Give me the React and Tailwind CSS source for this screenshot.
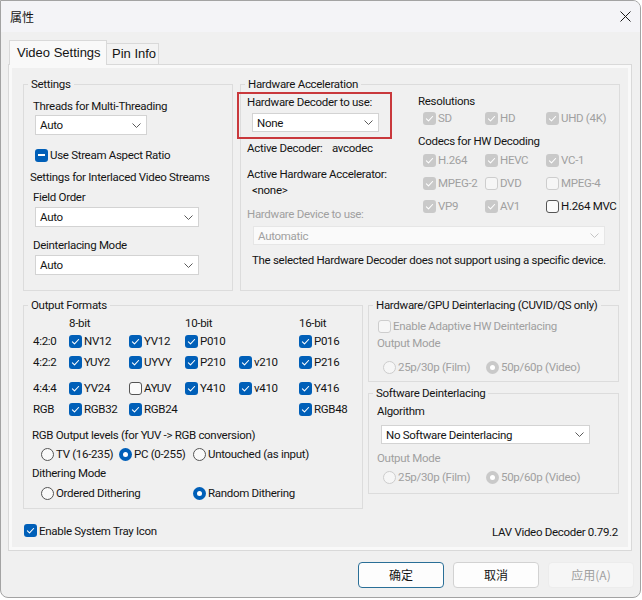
import React from 'react';

const GREY = 'text-[#a0a0a0]';

function CheckMark() {
  return (
    <svg width="13" height="13" viewBox="0 0 13 13" className="block">
      <path d="M3.4 6.9 L5.5 8.9 L9.6 4.5" fill="none" stroke="#ffffff" strokeWidth="1.1" strokeLinecap="round" strokeLinejoin="round" />
    </svg>
  );
}

function Box({ checked, disabled, mixed }) {
  if (mixed) {
    return (
      <span className="flex h-[13px] w-[13px] shrink-0 items-center justify-center rounded-[3px] bg-[#005fb8]">
        <span className="h-[1.5px] w-[7px] bg-white" />
      </span>
    );
  }
  if (checked) {
    return (
      <span className={`h-[13px] w-[13px] shrink-0 rounded-[3px] ${disabled ? 'bg-[#c9c9c9]' : 'bg-[#005fb8]'}`}>
        <CheckMark />
      </span>
    );
  }
  return (
    <span className={`h-[13px] w-[13px] shrink-0 rounded-[3px] border ${disabled ? 'border-[#cdcdcd] bg-[#f6f6f6]' : 'border-[#555555] bg-[#fbfbfb]'}`} />
  );
}

function Check({ label, checked, disabled, mixed, className = '' }) {
  return (
    <div className={`flex h-[16px] items-center gap-[2px] whitespace-nowrap ${className}`}>
      <Box checked={checked} disabled={disabled} mixed={mixed} />
      <span className={disabled ? GREY : ''}>{label}</span>
    </div>
  );
}

function Radio({ label, checked, disabled, className = '' }) {
  let dot;
  if (checked) {
    dot = (
      <span className={`flex h-[13px] w-[13px] shrink-0 items-center justify-center rounded-full ${disabled ? 'bg-[#c9c9c9]' : 'bg-[#005fb8]'}`}>
        <span className="h-[5px] w-[5px] rounded-full bg-white" />
      </span>
    );
  } else {
    dot = <span className={`h-[13px] w-[13px] shrink-0 rounded-full border ${disabled ? 'border-[#cdcdcd] bg-[#f6f6f6]' : 'border-[#555555] bg-[#f9f9f9]'}`} />;
  }
  return (
    <div className={`flex h-[16px] items-center gap-[2px] whitespace-nowrap ${className}`}>
      {dot}
      <span className={disabled ? GREY : ''}>{label}</span>
    </div>
  );
}

function Chevron({ disabled }) {
  return (
    <svg width="9" height="5" viewBox="0 0 9 5" className="block">
      <path d="M0.5 0.5 L4.5 4.5 L8.5 0.5" fill="none" stroke={disabled ? '#c4c4c4' : '#5a5a5a'} strokeWidth="1" />
    </svg>
  );
}

function Select({ value, disabled, className = '' }) {
  return (
    <div
      className={`flex items-center justify-between whitespace-nowrap border pl-[4px] pr-[5px] ${
        disabled ? 'border-[#e6e6e6] bg-[#fafafa] text-[#a0a0a0]' : 'border-[#d3d3d3] bg-white'
      } ${className}`}
    >
      <span>{value}</span>
      <Chevron disabled={disabled} />
    </div>
  );
}

function Group({ title, className = '', children }) {
  return (
    <fieldset className={`border border-[#dcdcdc] ${className}`}>
      <legend className="ml-[4px] whitespace-nowrap px-[3px] leading-[16px]">{title}</legend>
      {children}
    </fieldset>
  );
}

export default function App() {
  return (
    <div className="h-[600px] w-[642px] bg-white font-['Roboto','Noto_Sans_CJK_SC',sans-serif] text-[11.5px] leading-[16px] tracking-[-0.3px] text-[#141414]">
      <div className="flex h-[598px] w-[641px] flex-col overflow-hidden rounded-tr-[8px] rounded-b-[8px] border border-[#a3a3a3] bg-[#f0f0f0]">
        {/* title bar */}
        <div className="flex h-[31px] shrink-0 items-center justify-between bg-[#f4f4f7] pl-[9px] pr-[9px]">
          <span className="font-['Noto_Sans_CJK_SC',sans-serif] text-[12px] tracking-normal">属性</span>
          <svg width="11" height="11" viewBox="0 0 11 11">
            <path d="M0.5 0.5 L10.5 10.5 M10.5 0.5 L0.5 10.5" stroke="#1a1a1a" strokeWidth="1" />
          </svg>
        </div>

        {/* tabs */}
        <div className="mt-[8px] flex h-[24px] items-end pl-[8px] font-['Liberation_Sans',sans-serif] text-[13px] tracking-normal">
          <div className="relative z-10 -mb-px flex h-[25px] w-[98px] items-center border border-b-0 border-[#d9d9d9] bg-[#f9f9f9] pl-[7px]">
            Video Settings
          </div>
          <div className="flex h-[21px] w-[52px] items-center border border-l-0 border-b-0 border-[#d9d9d9] bg-[#f3f3f3] pl-[5px]">
            Pin Info
          </div>
        </div>

        {/* tab page */}
        <div className="ml-[7px] h-[487px] w-[624px] border border-[#d9d9d9] bg-[#f9f9f9] p-[3px]">
          <div className="h-full bg-[#f0f0f0] pl-[11px] pt-[8px]">
            <div className="flex gap-[7px]">
              <Group title="Settings" className="h-[215px] w-[210px]">
                <div className="whitespace-nowrap pl-[9px]">
                  <div className="mt-[6px]">Threads for Multi-Threading</div>
                  <Select value="Auto" className="ml-[2px] mt-[1px] h-[20px] w-[112px]" />
                  <Check label="Use Stream Aspect Ratio" mixed className="ml-[2px] mt-[12px]" />
                  <div className="-ml-[3px] mt-[6px]">Settings for Interlaced Video Streams</div>
                  <div className="mt-[4px]">Field Order</div>
                  <Select value="Auto" className="ml-[2px] mt-[2px] h-[20px] w-[164px]" />
                  <div className="mt-[10px]">Deinterlacing Mode</div>
                  <Select value="Auto" className="ml-[2px] mt-[2px] h-[20px] w-[164px]" />
                </div>
              </Group>

              <Group title="Hardware Acceleration" className="h-[215px] w-[380px]">
                <div className="flex whitespace-nowrap">
                  <div className="w-[171px]">
                    <div className="-ml-[4px] h-[47px] w-[155px] border-2 border-[#c9383c]">
                      <div className="pl-[8px]">Hardware Decoder to use:</div>
                      <Select value="None" className="ml-[13px] mt-[3px] h-[19px] w-[127px]" />
                    </div>
                    <div className="mt-[1px] flex pl-[6px]">
                      <span className="w-[85px]">Active Decoder:</span>
                      <span>avcodec</span>
                    </div>
                    <div className="mt-[10px] pl-[6px]">Active Hardware Accelerator:</div>
                    <div className="pl-[11px]">&lt;none&gt;</div>
                    <div className={`mt-[8px] pl-[6px] ${GREY}`}>Hardware Device to use:</div>
                  </div>
                  <div className="pl-[6px]">
                    <div className="mt-[1px]">Resolutions</div>
                    <div className="ml-[5px] mt-[1px] grid grid-cols-[62px_61px_auto]">
                      <Check label="SD" checked disabled />
                      <Check label="HD" checked disabled />
                      <Check label="UHD (4K)" checked disabled />
                    </div>
                    <div className="mt-[7px]">Codecs for HW Decoding</div>
                    <div className="ml-[5px] mt-[3px] grid grid-cols-[62px_61px_auto] gap-y-[7px]">
                      <Check label="H.264" checked disabled />
                      <Check label="HEVC" checked disabled />
                      <Check label="VC-1" checked disabled />
                      <Check label="MPEG-2" checked disabled />
                      <Check label="DVD" disabled />
                      <Check label="MPEG-4" disabled />
                      <Check label="VP9" checked disabled />
                      <Check label="AV1" checked disabled />
                      <Check label="H.264 MVC" />
                    </div>
                  </div>
                </div>
                <Select value="Automatic" disabled className="ml-[12px] mt-[4px] h-[19px] w-[352px]" />
                <div className="mt-[7px] whitespace-nowrap pl-[11px]">The selected Hardware Decoder does not support using a specific device.</div>
              </Group>
            </div>

            <div className="mt-[6px] flex gap-[5px]">
              <Group title="Output Formats" className="h-[212px] w-[340px]">
                <div className="mt-[2px] flex">
                  <span className="w-[45px]" />
                  <span className="w-[116px]">8-bit</span>
                  <span className="w-[114px]">10-bit</span>
                  <span>16-bit</span>
                </div>
                {[
                  ['4:2:0', 'mt-[2px]', [['NV12', true], ['YV12', true], ['P010', true], null, ['P016', true]]],
                  ['4:2:2', 'mt-[5px]', [['YUY2', true], ['UYVY', true], ['P210', true], ['v210', true], ['P216', true]]],
                  ['4:4:4', 'mt-[10px]', [['YV24', true], ['AYUV', false], ['Y410', true], ['v410', true], ['Y416', true]]],
                  ['RGB', 'mt-[5px]', [['RGB32', true], ['RGB24', true], null, null, ['RGB48', true]]],
                ].map(([label, mt, items]) => (
                  <div key={label} className={`grid grid-cols-[45px_60px_56px_54px_60px_auto] ${mt}`}>
                    <span className="pl-[9px]">{label}</span>
                    {items.map((it, i) => (it ? <Check key={i} label={it[0]} checked={it[1]} /> : <span key={i} />))}
                  </div>
                ))}
                <div className="mt-[10px] whitespace-nowrap pl-[8px]">RGB Output levels (for YUV -&gt; RGB conversion)</div>
                <div className="mt-[3px] flex pl-[17px]">
                  <Radio label="TV (16-235)" className="w-[78px]" />
                  <Radio label="PC (0-255)" checked className="w-[74px]" />
                  <Radio label="Untouched (as input)" />
                </div>
                <div className="mt-[3px] pl-[8px]">Dithering Mode</div>
                <div className="mt-[4px] flex pl-[17px]">
                  <Radio label="Ordered Dithering" className="w-[152px]" />
                  <Radio label="Random Dithering" checked />
                </div>
              </Group>

              <div className="w-[251px]">
                <Group title="Hardware/GPU Deinterlacing (CUVID/QS only)" className="h-[85px] w-full">
                  <Check label="Enable Adaptive HW Deinterlacing" disabled className="ml-[9px] mt-[5px]" />
                  <div className={`mt-[1px] pl-[8px] ${GREY}`}>Output Mode</div>
                  <div className="mt-[8px] flex pl-[14px]">
                    <Radio label="25p/30p (Film)" disabled className="w-[103px]" />
                    <Radio label="50p/60p (Video)" checked disabled />
                  </div>
                </Group>
                <Group title="Software Deinterlacing" className="mt-[3px] h-[109px] w-full">
                  <div className="mt-[2px] pl-[8px]">Algorithm</div>
                  <Select value="No Software Deinterlacing" className="ml-[12px] mt-[6px] h-[19px] w-[209px]" />
                  <div className={`mt-[6px] pl-[8px] ${GREY}`}>Output Mode</div>
                  <div className="mt-[3px] flex pl-[14px]">
                    <Radio label="25p/30p (Film)" disabled className="w-[103px]" />
                    <Radio label="50p/60p (Video)" checked disabled />
                  </div>
                </Group>
              </div>
            </div>

            <div className="mt-[12px] flex items-center justify-between pr-[10px]">
              <Check label="Enable System Tray Icon" checked className="ml-[1px]" />
              <span className="mt-[3px]">LAV Video Decoder 0.79.2</span>
            </div>
          </div>
        </div>

        {/* buttons */}
        <div className="mt-[11px] flex justify-end gap-[9px] pr-[6px] font-['Noto_Sans_CJK_SC',sans-serif] tracking-normal">
          <button type="button" className="h-[26px] w-[86px] rounded-[4px] border border-[#2a6f97] bg-[#fdfdfd] text-[12px]">确定</button>
          <button type="button" className="h-[26px] w-[86px] rounded-[4px] border border-[#d2d2d2] bg-[#fdfdfd] text-[12px]">取消</button>
          <button type="button" className="h-[26px] w-[86px] rounded-[4px] border border-[#ececec] bg-[#f6f6f6] text-[12px] text-[#a0a0a0]">应用(A)</button>
        </div>
      </div>
    </div>
  );
}
